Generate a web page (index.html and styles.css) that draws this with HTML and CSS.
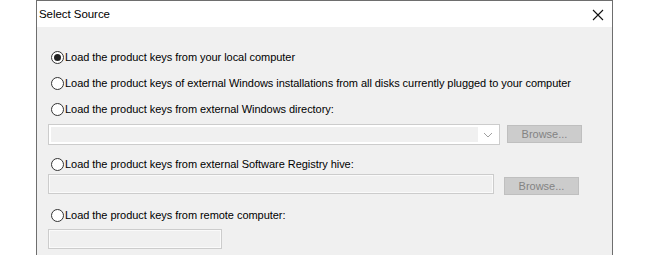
FILE: index.html
```html
<!DOCTYPE html>
<html lang="en">
<head>
    <meta charset="UTF-8">
    <title>Select Source</title>
    <link rel="stylesheet" href="styles.css">
</head>
<body>
    <div class="dialog">
        <div class="title-bar">
            <span class="title">Select Source</span>
            <span class="close">
                <svg width="12" height="12" viewBox="0 0 12 12">
                    <path d="M1 1 L11 11 M11 1 L1 11" stroke="#111" stroke-width="1.1" fill="none"/>
                </svg>
            </span>
        </div>
        <div class="content">
            <label class="option">
                <span class="radio checked"></span>
                Load the product keys from your local computer
            </label>
            <label class="option">
                <span class="radio"></span>
                Load the product keys of external Windows installations from all disks currently plugged to your computer
            </label>
            <label class="option">
                <span class="radio"></span>
                Load the product keys from external Windows directory:
            </label>
            <div class="field-row">
                <div class="combo">
                    <div class="combo-field"></div>
                    <div class="combo-arrow">
                        <svg width="10" height="6" viewBox="0 0 10 6">
                            <path d="M1 1 L5 5 L9 1" stroke="#a0a0a0" stroke-width="1" fill="none"/>
                        </svg>
                    </div>
                </div>
                <button class="browse browse-1" disabled>Browse...</button>
            </div>
            <label class="option option-small">
                <span class="radio"></span>
                Load the product keys from external Software Registry hive:
            </label>
            <div class="field-row">
                <input class="textbox textbox-wide" type="text" disabled>
                <button class="browse browse-2" disabled>Browse...</button>
            </div>
            <label class="option option-small option-gap">
                <span class="radio"></span>
                Load the product keys from remote computer:
            </label>
            <div class="field-row remote-row">
                <input class="textbox textbox-short" type="text" disabled>
            </div>
        </div>
    </div>
</body>
</html>
```

FILE: styles.css
```css
* {
    margin: 0;
    padding: 0;
    box-sizing: border-box;
}

body {
    background-color: #ffffff;
    font-family: "Liberation Sans", Arial, sans-serif;
    font-size: 11px;
    letter-spacing: -0.05px;
    color: #000;
    overflow: hidden;
}

.dialog {
    margin-left: 36px;
    width: 577px;
    height: 255px;
    background-color: #f0f0f0;
    border: 1px solid #6e6e6e;
    border-bottom: none;
}

.title-bar {
    height: 26px;
    background-color: #fff;
    display: flex;
    align-items: center;
    justify-content: space-between;
    padding-left: 2px;
    padding-right: 8px;
}

.title {
    font-size: 11.5px;
}

.close {
    display: flex;
    align-items: center;
    margin-top: 1px;
}

.content {
    padding: 17px 0 0 11px;
}

.option {
    display: flex;
    align-items: center;
    height: 26px;
    padding-left: 3px;
    white-space: nowrap;
}

.option-small {
    height: 20px;
    margin-top: 9px;
}

.option-gap {
    margin-top: 10px;
}

.radio {
    width: 13px;
    height: 13px;
    border: 1px solid #333;
    border-radius: 50%;
    background-color: #fff;
    margin-right: 1px;
    position: relative;
    flex-shrink: 0;
}

.radio.checked::after {
    content: "";
    position: absolute;
    left: 2px;
    top: 2px;
    width: 7px;
    height: 7px;
    border-radius: 50%;
    background-color: #222;
}

.field-row {
    display: flex;
    align-items: flex-start;
}

.field-row:nth-child(4) {
    margin-top: 2px;
}

.combo {
    width: 452px;
    height: 21px;
    border: 1px solid #cccccc;
    background-color: #fff;
    padding: 2px;
    display: flex;
}

.combo-field {
    flex: 1;
    background-color: #f0f0f0;
}

.combo-arrow {
    width: 19px;
    display: flex;
    align-items: center;
    justify-content: center;
}

.browse {
    width: 75px;
    height: 18px;
    background-color: #cccccc;
    border: 1px solid #bfbfbf;
    color: #838383;
    font-family: "Liberation Sans", Arial, sans-serif;
    font-size: 11px;
    line-height: 16px;
}

.browse-1 {
    margin-left: 7px;
    margin-top: 1px;
}

.browse-2 {
    margin-left: 10px;
    margin-top: 3px;
}

.textbox {
    height: 20px;
    border: 1px solid #cccccc;
    background-color: #f0f0f0;
    box-shadow: inset 0 0 0 1px #fafafa;
}

.textbox-wide {
    width: 446px;
}

.textbox-short {
    width: 174px;
}

.remote-row {
    margin-top: 4px;
}
```
